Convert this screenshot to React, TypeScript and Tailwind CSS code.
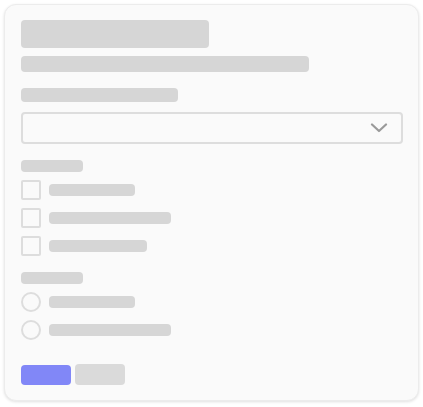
import React from 'react';

const Bar: React.FC<{ className: string }> = ({ className }) => (
  <div className={`rounded-[4px] bg-[#d6d6d6] ${className}`} />
);

export default function App() {
  return (
    <div className="min-h-screen bg-white p-1 font-['Liberation_Sans',sans-serif]">
      <div className="flex h-[397px] w-[415px] flex-col rounded-xl border border-[#ececec] bg-[#fafafa] px-4 pt-[15px] shadow-[0_1px_3px_rgba(0,0,0,0.12)]">
        {/* Heading */}
        <Bar className="h-7 w-[188px]" />
        <Bar className="mt-2 h-4 w-[288px]" />

        {/* Select field */}
        <Bar className="mt-4 h-[14px] w-[157px]" />
        <div className="mt-[10px] flex h-8 w-[382px] items-center justify-end rounded-[4px] border-2 border-[#dddddd] pr-[13px]">
          <svg width="18" height="10" viewBox="0 0 18 10" fill="none">
            <path d="M2 1.5 9 8l7-6.5" stroke="#9a9a9a" strokeWidth="2.2" strokeLinecap="round" strokeLinejoin="round" />
          </svg>
        </div>

        {/* Checkboxes */}
        <Bar className="mt-4 h-3 w-[62px]" />
        <div className="mt-2 flex flex-col gap-2">
          {['w-[86px]', 'w-[122px]', 'w-[98px]'].map((w, i) => (
            <div key={i} className="flex h-5 items-center gap-2">
              <div className="h-5 w-5 rounded-[2px] border-2 border-[#dddddd]" />
              <Bar className={`h-3 ${w}`} />
            </div>
          ))}
        </div>

        {/* Radios */}
        <Bar className="mt-4 h-3 w-[62px]" />
        <div className="mt-2 flex flex-col gap-2">
          {['w-[86px]', 'w-[122px]'].map((w, i) => (
            <div key={i} className="flex h-5 items-center gap-2">
              <div className="h-5 w-5 rounded-full border-2 border-[#dddddd]" />
              <Bar className={`h-3 ${w}`} />
            </div>
          ))}
        </div>

        {/* Actions */}
        <div className="mt-6 flex items-end gap-1">
          <div className="h-5 w-[50px] rounded-[4px] bg-[#8187f7]" />
          <div className="h-[21px] w-[50px] rounded-[4px] bg-[#dadada]" />
        </div>
      </div>
    </div>
  );
}
